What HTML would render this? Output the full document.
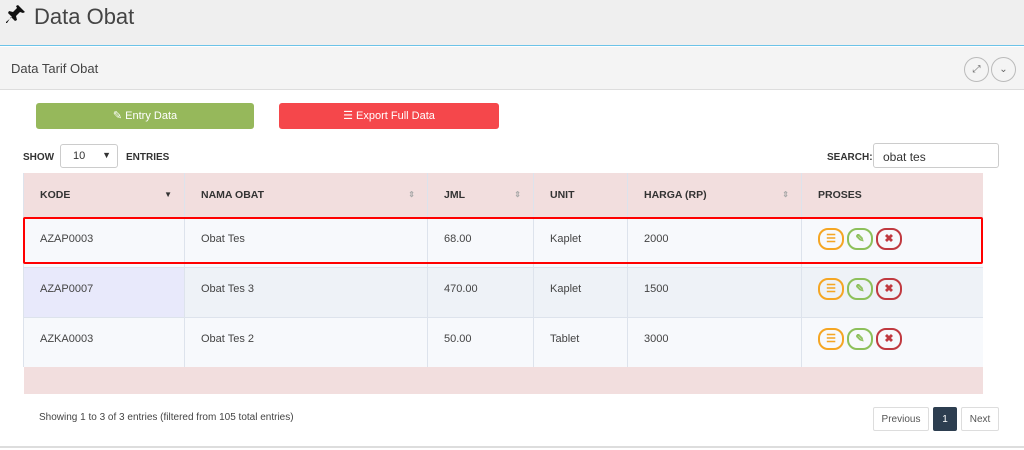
<!DOCTYPE html>
<html><head><style>
*{margin:0;padding:0;box-sizing:border-box}
body{width:1024px;height:450px;overflow:hidden;background:#fff;font-family:"Liberation Sans",sans-serif;color:#333;position:relative}
.a{position:absolute}
.top{left:0;top:0;width:1024px;height:46px;background:#efefef}
.ph{left:0;top:47px;width:1024px;height:43px;background:#f4f4f4;border-bottom:1px solid #ddd}
.circ{width:25px;height:25px;border:1px solid #bbb;border-radius:50%;background:#f4f4f4;font-size:10px;color:#666;text-align:center;line-height:23px}
.btn{height:26px;border-radius:3px;color:#fff;font-size:11px;text-align:center;line-height:26px}
.lbl{font-size:10px;font-weight:bold;color:#333}
.inp{border:1px solid #ccc;border-radius:3px;background:#fff;font-size:11px}
table{position:absolute;left:23px;top:173px;width:960px;border-collapse:collapse;font-size:11px;color:#444}
td,th{border-left:1px solid #dde3ec;text-align:left;padding-left:16px;font-weight:normal}
th{height:44px;background:#f2dede;font-weight:bold;font-size:10.5px;color:#333;position:relative}
th .s{position:absolute;right:12px;top:17px;font-size:8px;color:#aaa}
tr.r td{height:50px;border-top:1px solid #dde3ec;padding-bottom:6px}
.ic{display:inline-block;width:26px;height:22px;border:2px solid;border-radius:10px;margin-right:3px;vertical-align:middle;text-align:center;font-size:11px;line-height:18px;font-weight:bold}
.o{border-color:#f5a623;color:#f5a623}.g{border-color:#8dc05a;color:#8dc05a}.x{border-color:#c0393f;color:#c0393f}
.pg{height:24px;border:1px solid #ddd;font-size:10px;line-height:24px;text-align:center;color:#555;background:#fff;border-radius:2px}
</style></head><body>
<div class="a top"></div>
<div class="a" style="left:0;top:45px;width:1024px;height:1px;background:#6cc3e8"></div>
<svg class="a" style="left:5px;top:3px" width="22" height="22" viewBox="0 0 22 22"><path d="M13 2 L20 9 L18 10 L15 9 L11 13 L12 17 L10 18 L6 14 L2 20 L1 20 L1 19 L7 14 L3 10 L4 8 L8 9 L12 5 L11 3 Z" fill="#111"/></svg>
<div class="a" style="left:34px;top:4px;font-size:22px;color:#444">Data Obat</div>
<div class="a ph"></div>
<div class="a" style="left:11px;top:61px;font-size:13px;color:#444">Data Tarif Obat</div>
<div class="a circ" style="left:964px;top:57px">&#10530;</div>
<div class="a circ" style="left:991px;top:57px">&#8964;</div>
<div class="a btn" style="left:36px;top:103px;width:218px;background:#96b85b">&#9998; Entry Data</div>
<div class="a btn" style="left:279px;top:103px;width:220px;background:#f5474b">&#9776; Export Full Data</div>
<div class="a lbl" style="left:23px;top:152px">SHOW</div>
<div class="a inp" style="left:60px;top:144px;width:58px;height:24px;padding:5px 12px">10<span style="position:absolute;right:6px;font-size:9px">&#9660;</span></div>
<div class="a lbl" style="left:126px;top:152px">ENTRIES</div>
<div class="a lbl" style="left:827px;top:152px">SEARCH:</div>
<div class="a inp" style="left:873px;top:143px;width:126px;height:25px;padding:6px 9px;font-size:12px">obat tes</div>
<table>
<tr><th style="width:161px">KODE<span class="s" style="color:#333">&#9660;</span></th><th style="width:243px">NAMA OBAT<span class="s">&#8661;</span></th><th style="width:106px">JML<span class="s">&#8661;</span></th><th style="width:94px">UNIT</th><th style="width:174px">HARGA (RP)<span class="s">&#8661;</span></th><th>PROSES</th></tr>
<tr class="r" style="background:#f7f9fc"><td>AZAP0003</td><td>Obat Tes</td><td>68.00</td><td>Kaplet</td><td>2000</td><td><span class="ic o">&#9776;</span><span class="ic g">&#9998;</span><span class="ic x">&#10006;</span></td></tr>
<tr class="r" style="background:#eef2f7"><td style="background:#e8e9fb">AZAP0007</td><td>Obat Tes 3</td><td>470.00</td><td>Kaplet</td><td>1500</td><td><span class="ic o">&#9776;</span><span class="ic g">&#9998;</span><span class="ic x">&#10006;</span></td></tr>
<tr class="r" style="background:#f7f9fc"><td>AZKA0003</td><td>Obat Tes 2</td><td>50.00</td><td>Tablet</td><td>3000</td><td><span class="ic o">&#9776;</span><span class="ic g">&#9998;</span><span class="ic x">&#10006;</span></td></tr>
<tr><td colspan="6" style="height:27px;background:#f2dede;border:none"></td></tr>
</table>
<div class="a" style="left:23px;top:217px;width:960px;height:47px;border:2px solid #f00;border-radius:2px"></div>
<div class="a" style="left:39px;top:412px;font-size:10px;color:#444">Showing 1 to 3 of 3 entries (filtered from 105 total entries)</div>
<div class="a pg" style="left:873px;top:407px;width:56px">Previous</div>
<div class="a pg" style="left:933px;top:407px;width:24px;background:#2d3e50;color:#fff;border-color:#2d3e50">1</div>
<div class="a pg" style="left:961px;top:407px;width:38px">Next</div>
<div class="a" style="left:0;top:446px;width:1024px;height:2px;background:#ddd"></div>
</body></html>
